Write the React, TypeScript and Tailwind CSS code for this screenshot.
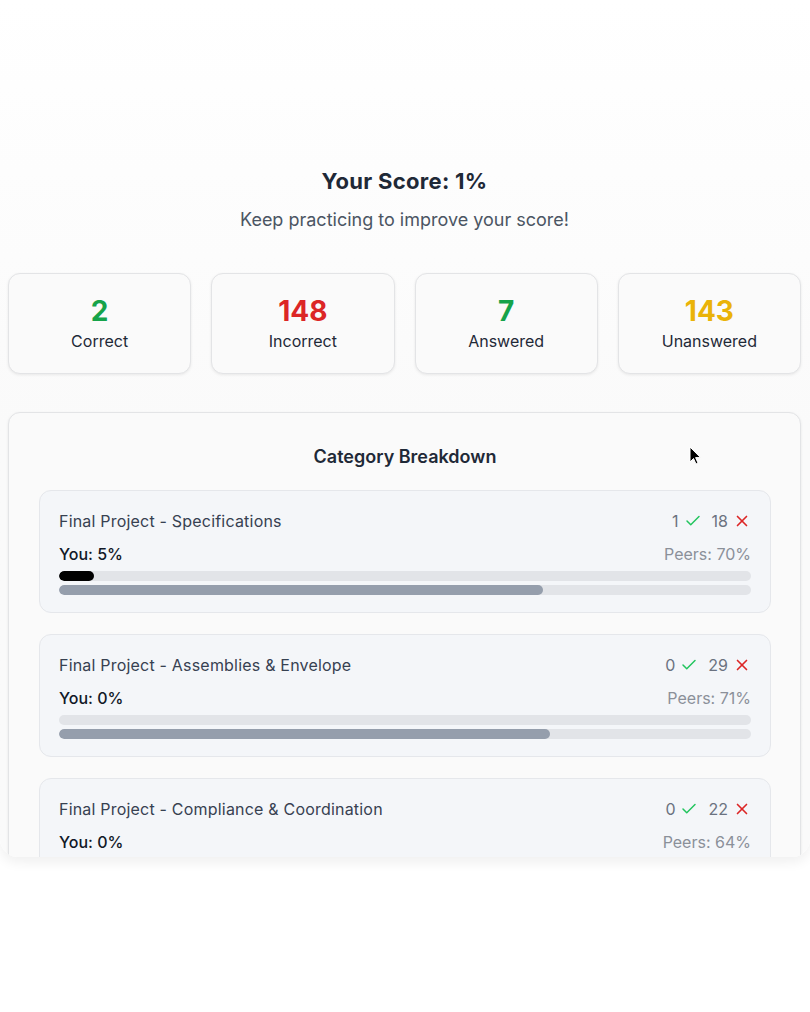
import React from "react";
import { Check, X } from "lucide-react";

const stats = [
  { value: "2", label: "Correct", color: "text-[#16a34a]" },
  { value: "148", label: "Incorrect", color: "text-[#dc2626]" },
  { value: "7", label: "Answered", color: "text-[#16a34a]" },
  { value: "143", label: "Unanswered", color: "text-[#eab308]" },
];

const cats = [
  { name: "Final Project - Specifications", c: 1, w: 18, you: 5, peers: 70 },
  { name: "Final Project - Assemblies & Envelope", c: 0, w: 29, you: 0, peers: 71 },
  { name: "Final Project - Compliance & Coordination", c: 0, w: 22, you: 0, peers: 64 },
];

export default function App() {
  return (
    <div
      className="w-[810px] h-[1012px] bg-white relative"
      style={{ fontFamily: "Inter, 'Noto Sans', sans-serif" }}
    >
      <div className="h-[857px] overflow-hidden rounded-b-[18px] bg-gradient-to-b from-white via-[#fafafa] to-[#fafafa] shadow-[0_6px_12px_rgba(0,0,0,0.06)] pl-2 pr-[9px] pt-[166px]">
        <h1 className="text-center text-[22px] leading-[30px] font-bold text-[#1f2937] tracking-[0.3px]">
          Your Score: 1%
        </h1>
        <p className="mt-[10px] text-center text-[18px] leading-[28px] text-[#4b5563]">
          Keep practicing to improve your score!
        </p>

        <div className="mt-[39px] grid grid-cols-4 gap-5">
          {stats.map((s) => (
            <div
              key={s.label}
              className="h-[101px] rounded-xl border border-[#e3e4e6] bg-[#fafafa] shadow-[0_1px_3px_rgba(0,0,0,0.08)] flex flex-col items-center pt-[19px]"
            >
              <div className={`text-[28px] leading-[36px] font-bold ${s.color}`}>{s.value}</div>
              <div className="text-[16px] leading-[24px] text-[#1f2937]">{s.label}</div>
            </div>
          ))}
        </div>

        <div className="mt-[38px] rounded-xl border border-[#e3e4e6] bg-[#fafafa] shadow-[0_1px_3px_rgba(0,0,0,0.08)] pl-[30px] pr-[29px] pt-[30px] pb-8">
          <h2 className="text-center text-[18px] leading-[28px] font-semibold text-[#1f2937]">
            Category Breakdown
          </h2>
          <div className="mt-[19px] flex flex-col gap-[21px]">
            {cats.map((c) => (
              <div
                key={c.name}
                className="rounded-xl border border-[#e5e7eb] bg-[#f4f6f9] px-[19px] pt-[18px] pb-[17px]"
              >
                <div className="flex items-center justify-between">
                  <span className="text-[16px] leading-[24px] text-[#374151] tracking-[0.2px]">{c.name}</span>
                  <div className="flex items-center text-[16px] leading-[24px] text-[#6b7280]">
                    <span>{c.c}</span>
                    <Check className="ml-[5px] w-[18px] h-[18px] text-[#22c55e]" strokeWidth={2} />
                    <span className="ml-[10px]">{c.w}</span>
                    <X className="ml-[5px] w-[18px] h-[18px] text-[#dc2626]" strokeWidth={2.2} />
                  </div>
                </div>
                <div className="mt-[9px] flex items-center justify-between">
                  <span className="text-[16px] leading-[24px] font-medium text-[#111827]">You: {c.you}%</span>
                  <span className="text-[16px] leading-[24px] text-[#8b9099]">Peers: {c.peers}%</span>
                </div>
                <div className="mt-[5px] h-[10px] rounded-full bg-[#e2e4e8] overflow-hidden">
                  <div className="h-full rounded-full bg-black" style={{ width: `${c.you}%` }} />
                </div>
                <div className="mt-1 h-[10px] rounded-full bg-[#e2e4e8] overflow-hidden">
                  <div className="h-full rounded-full bg-[#959eac]" style={{ width: `${c.peers}%` }} />
                </div>
              </div>
            ))}
          </div>
        </div>
      </div>

      <svg
        className="absolute left-[689px] top-[446px]"
        width="13"
        height="20"
        viewBox="0 0 13 20"
      >
        <path d="M1 1 L1 16 L4.5 12.5 L7 18 L9 17 L6.6 11.6 L11.5 11.6 Z" fill="#000" stroke="#fff" strokeWidth="1" />
      </svg>
    </div>
  );
}
